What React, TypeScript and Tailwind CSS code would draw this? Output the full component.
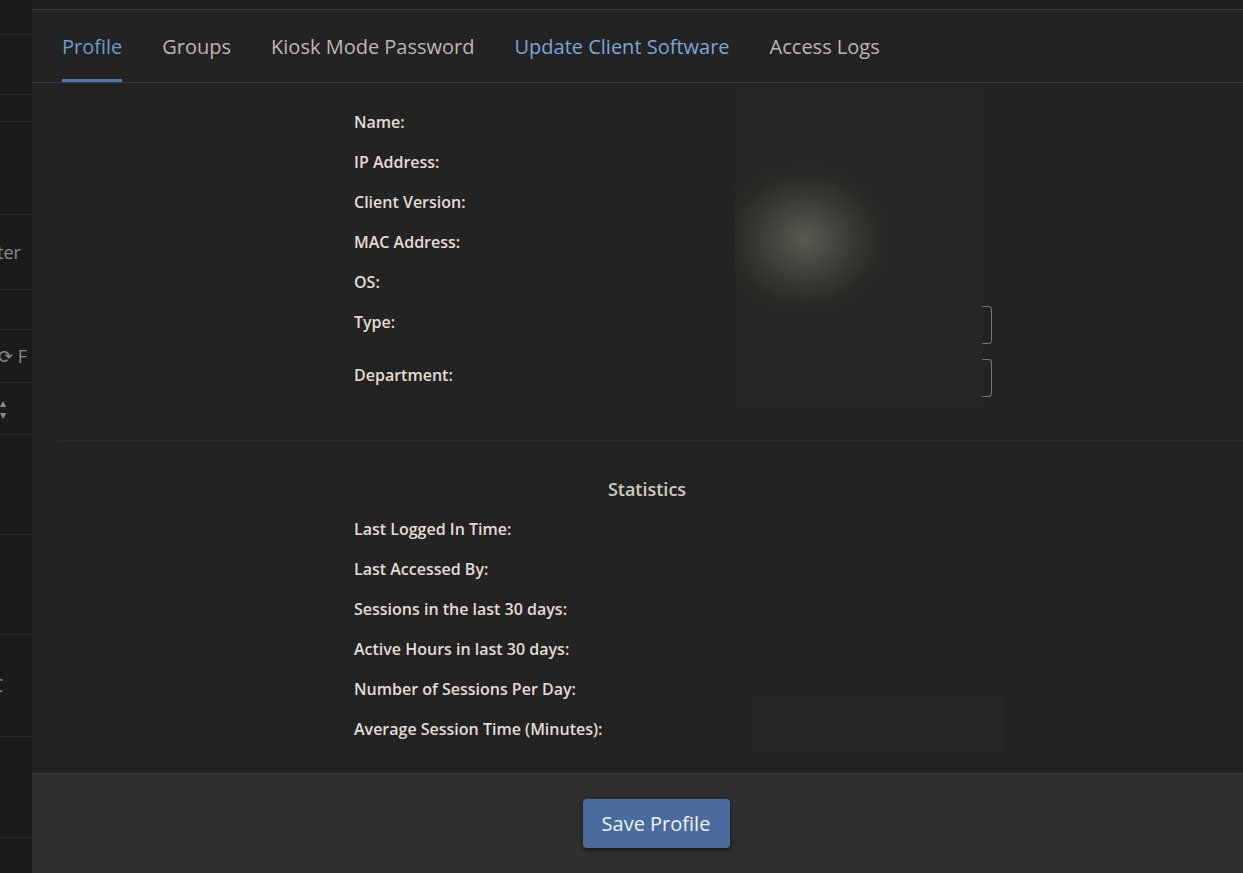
export default function App() {
  const info = ["Name:", "IP Address:", "Client Version:", "MAC Address:", "OS:"];
  const stats = ["Last Logged In Time:", "Last Accessed By:", "Sessions in the last 30 days:", "Active Hours in last 30 days:", "Number of Sessions Per Day:", "Average Session Time (Minutes):"];
  const side = [35, 60, 27, 93, 75, 40, 53, 52, 100, 100, 102, 101];
  return (
    <div className="w-[1243px] h-[873px] flex overflow-hidden bg-[#1b1b1b] text-[#e2ddd3]" style={{ fontFamily: '"Open Sans", "Noto Sans", sans-serif' }}>
      <div className="w-[32px] shrink-0 flex flex-col text-[#8a8a8a] text-[18px] overflow-hidden">
        {side.map((h, i) => (
          <div key={i} className="border-b border-[#2c2c2c] flex items-center whitespace-nowrap shrink-0" style={{ height: h }}>
            {i === 4 ? <span className="ml-[-14px]">uter</span> : i === 6 ? <span className="ml-[-2px]">⟳ F</span> : i === 7 ? <span className="text-[12px] leading-none">▴<br/>▾</span> : i === 10 ? <span className="ml-[-8px]">C</span> : null}
          </div>
        ))}
      </div>
      <div className="w-[1248px] shrink-0 flex flex-col">
        <div className="h-[10px] bg-[#1f1f1f] border-b border-[#3a3a3a]" />
        <div className="bg-[#232323] flex-1 flex flex-col">
          <div className="h-[73px] flex items-end gap-[40px] pl-[30px] border-b border-[#3c3c3c] text-[20px]">
            {["Profile", "Groups", "Kiosk Mode Password", "Update Client Software", "Access Logs"].map((t, i) => (
              <div key={t} className={`relative pb-[20px] ${i === 0 ? "text-[#6b9cd0]" : i === 3 ? "text-[#7aa7d6]" : "text-[#bdb8ae]"}`}>
                {t}
                {i === 0 && <div className="absolute left-0 right-0 bottom-0 h-[3px] bg-[#4f77a8]" />}
              </div>
            ))}
          </div>
          <div className="flex-1 flex flex-col">
            <div className="relative h-[358px] border-b border-[#2e2e2e] mx-[26px]">
              <div className="pl-[296px] pt-[27px] flex flex-col text-[16px] font-semibold">
                {info.map(l => <div key={l} className="h-[40px]">{l}</div>)}
                <div className="h-[53px]">Type:</div>
                <div className="h-[40px]">Department:</div>
              </div>
              <div className="absolute left-[677px] top-[6px] w-[248px] h-[320px]" style={{ background: "radial-gradient(ellipse 90px 80px at 70px 150px, #5b5a52 0%, #3b3a35 50%, #2a2a27 80%, #262624 100%)" }} />
              <div className="absolute left-[924px] top-[223px] w-[10px] h-[38px] border border-l-0 border-[#777] rounded-r" />
              <div className="absolute left-[924px] top-[276px] w-[10px] h-[38px] border border-l-0 border-[#777] rounded-r" />
            </div>
            <div className="relative pt-[35px] text-[16px] font-semibold">
              <div className="text-center w-full pr-[18px] text-[18px] text-[#cfcac0] mb-[14px]">Statistics</div>
              <div className="pl-[322px]">
                {stats.map(l => <div key={l} className="h-[40px]">{l}</div>)}
              </div>
              <div className="absolute left-[713px] top-[250px] w-[260px] h-[62px] bg-[#252525]" />
            </div>
          </div>
          <div className="h-[100px] mt-auto bg-[#2f2f2f] border-t border-[#3a3a3a] flex items-center justify-center">
            <button className="w-[147px] h-[49px] bg-[#4a6b9d] rounded text-[20px] text-[#eef2f7] shadow-[0_2px_4px_rgba(0,0,0,0.5)]">Save Profile</button>
          </div>
        </div>
      </div>
    </div>
  );
}
